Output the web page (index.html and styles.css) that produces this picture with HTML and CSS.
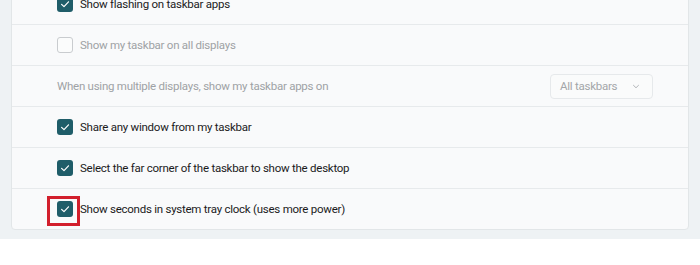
FILE: index.html
```html
<!DOCTYPE html>
<html lang="en">
<head>
<meta charset="utf-8">
<title>Taskbar behaviors</title>
<link rel="stylesheet" href="styles.css">
</head>
<body>
<div class="page">
  <div class="card">
    <div class="row">
      <span class="check on"><svg viewBox="0 0 16 16"><path d="M4.6 8.3l2.4 2.4 4.5-4.9"/></svg></span>
      <span class="label">Show flashing on taskbar apps</span>
    </div>
    <div class="row">
      <span class="check off"></span>
      <span class="label dim">Show my taskbar on all displays</span>
    </div>
    <div class="row spread">
      <span class="label dim">When using multiple displays, show my taskbar apps on</span>
      <span class="select"><span>All taskbars</span><svg viewBox="0 0 10 6"><path d="M1.5 1.2l3.5 3.4 3.5-3.4"/></svg></span>
    </div>
    <div class="row">
      <span class="check on"><svg viewBox="0 0 16 16"><path d="M4.6 8.3l2.4 2.4 4.5-4.9"/></svg></span>
      <span class="label">Share any window from my taskbar</span>
    </div>
    <div class="row">
      <span class="check on"><svg viewBox="0 0 16 16"><path d="M4.6 8.3l2.4 2.4 4.5-4.9"/></svg></span>
      <span class="label">Select the far corner of the taskbar to show the desktop</span>
    </div>
    <div class="row">
      <span class="check on marked"><svg viewBox="0 0 16 16"><path d="M4.6 8.3l2.4 2.4 4.5-4.9"/></svg><span class="mark"></span></span>
      <span class="label">Show seconds in system tray clock (uses more power)</span>
    </div>
  </div>
</div>
</body>
</html>
```
FILE: styles.css
```css
html, body {
  margin: 0;
  padding: 0;
  background: #ffffff;
}
body {
  font-family: Roboto, "Noto Sans", sans-serif;
  font-size: 11.5px;
  letter-spacing: -0.25px;
  color: #1b1b1b;
  overflow: hidden;
}
.page {
  background: #eef2f4;
  padding: 0 11px 9px 11px;
}
.card {
  margin-top: -17px;
  background: #f9fafb;
  border: 1px solid #e2e6e8;
  border-radius: 4px;
}
.row {
  height: 40px;
  display: flex;
  align-items: center;
  padding-left: 45px;
  padding-right: 35px;
  border-bottom: 1px solid #e7eaec;
}
.row:last-child {
  border-bottom: none;
}
.row.spread {
  justify-content: space-between;
}
.check {
  position: relative;
  width: 16px;
  height: 16px;
  box-sizing: border-box;
  border-radius: 3px;
  margin-right: 7px;
  flex: none;
}
.check.on {
  background: #1f5d69;
}
.check.off {
  border: 1px solid #c9cccf;
  background: #fbfcfc;
}
.check svg {
  display: block;
  width: 16px;
  height: 16px;
  fill: none;
  stroke: #ffffff;
  stroke-width: 1.2;
  stroke-linecap: round;
  stroke-linejoin: round;
}
.mark {
  position: absolute;
  left: -10px;
  top: -5px;
  width: 33px;
  height: 30px;
  box-sizing: border-box;
  border: 3px solid #d21f2c;
}
.label {
  white-space: nowrap;
}
.label.dim {
  color: #9ea2a5;
}
.select {
  width: 103px;
  height: 25px;
  box-sizing: border-box;
  border: 1px solid #e6e9eb;
  border-radius: 4px;
  background: #fafbfb;
  display: flex;
  align-items: center;
  justify-content: space-between;
  padding: 0 12px 0 9px;
  color: #a3a6a9;
}
.select svg {
  width: 8px;
  height: 5px;
  fill: none;
  stroke: #a9acaf;
  stroke-width: 1.1;
}
```
